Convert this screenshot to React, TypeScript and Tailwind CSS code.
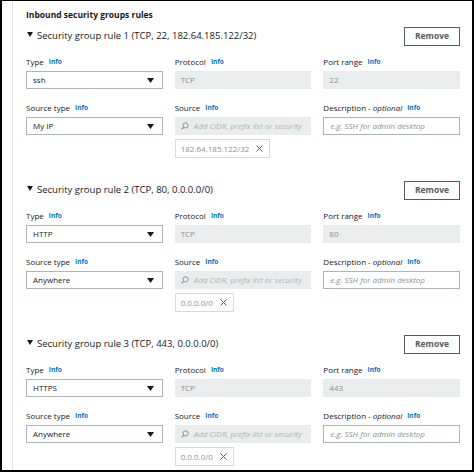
import React from "react";

const font = { fontFamily: '"Open Sans", "Noto Sans", sans-serif' };

function Caret() {
  return (
    <svg width="7" height="5" viewBox="0 0 7 5" className="shrink-0">
      <path d="M0 0 H7 L3.5 5 Z" fill="#16191f" />
    </svg>
  );
}

function Label({ children }: { children: React.ReactNode }) {
  return (
    <div className="h-[14px] flex items-center gap-[5px] text-[8px] text-[#16191f] leading-none whitespace-nowrap">
      {children}
      <span className="text-[6.5px] font-bold text-[#0073bb]">Info</span>
    </div>
  );
}

function Select({ value }: { value: string }) {
  return (
    <div className="h-[18px] border border-[#aab7b8] bg-white flex items-center justify-between pl-[6px] pr-[8px] text-[8px] text-[#16191f]">
      <span>{value}</span>
      <Caret />
    </div>
  );
}

function Disabled({ value }: { value: string }) {
  return (
    <div className="h-[18px] bg-[#eaeded] flex items-center pl-[6px] text-[8px] text-[#879596]">
      {value}
    </div>
  );
}

function Search() {
  return (
    <div className="h-[18px] bg-[#eaeded] flex items-center pl-[6px] gap-[5px] overflow-hidden whitespace-nowrap">
      <svg width="8" height="8" viewBox="0 0 8 8" className="shrink-0">
        <circle cx="4.6" cy="3.4" r="2.6" fill="none" stroke="#879596" strokeWidth="1" />
        <path d="M2.7 5.3 L0.6 7.4" stroke="#879596" strokeWidth="1.2" />
      </svg>
      <span className="text-[8px] italic text-[#aab7b8]">Add CIDR, prefix list or security</span>
    </div>
  );
}

function Chip({ value }: { value: string }) {
  return (
    <div className="h-[19px] self-start border border-[#d5dbdb] bg-white flex items-center pl-[5px] pr-[6px] gap-[7px] text-[8px] text-[#879596]">
      <span>{value}</span>
      <svg width="7" height="7" viewBox="0 0 7 7">
        <path d="M0.5 0.5 L6.5 6.5 M6.5 0.5 L0.5 6.5" stroke="#545b64" strokeWidth="1" />
      </svg>
    </div>
  );
}

function Desc() {
  return (
    <div className="h-[18px] border border-[#aab7b8] bg-white flex items-center pl-[6px] text-[8px] italic text-[#879596] whitespace-nowrap overflow-hidden">
      e.g. SSH for admin desktop
    </div>
  );
}

type Rule = { n: number; title: string; type: string; port: string; sourceType: string; cidr: string };

const rules: Rule[] = [
  { n: 1, title: "(TCP, 22, 182.64.185.122/32)", type: "ssh", port: "22", sourceType: "My IP", cidr: "182.64.185.122/32" },
  { n: 2, title: "(TCP, 80, 0.0.0.0/0)", type: "HTTP", port: "80", sourceType: "Anywhere", cidr: "0.0.0.0/0" },
  { n: 3, title: "(TCP, 443, 0.0.0.0/0)", type: "HTTPS", port: "443", sourceType: "Anywhere", cidr: "0.0.0.0/0" },
];

function RuleBlock({ r }: { r: Rule }) {
  return (
    <div className="flex flex-col">
      <div className="h-[19px] flex items-center justify-between">
        <div className="flex items-center">
          <svg width="6" height="5" viewBox="0 0 6 5" className="ml-[1px] mr-[4px] -mt-[5px]">
            <path d="M0 0 H6 L3 5 Z" fill="#16191f" />
          </svg>
          <span className="text-[9.5px] text-[#16191f] whitespace-nowrap">
            Security group rule {r.n} {r.title}
          </span>
        </div>
        <button className="w-[56px] h-[19px] border border-[#545b64] bg-white text-[8.5px] font-bold text-[#545b64] flex items-center justify-center">
          Remove
        </button>
      </div>
      <div className="grid grid-cols-3 gap-x-[12px] mt-[9px]">
        <div className="flex flex-col gap-[2px]">
          <Label>Type</Label>
          <Select value={r.type} />
        </div>
        <div className="flex flex-col gap-[2px]">
          <Label>Protocol</Label>
          <Disabled value="TCP" />
        </div>
        <div className="flex flex-col gap-[2px]">
          <Label>Port range</Label>
          <Disabled value={r.port} />
        </div>
      </div>
      <div className="grid grid-cols-3 gap-x-[12px] mt-[12px]">
        <div className="flex flex-col gap-[2px]">
          <Label>Source type</Label>
          <Select value={r.sourceType} />
        </div>
        <div className="flex flex-col gap-[2px]">
          <Label>Source</Label>
          <Search />
          <div className="mt-[2px] flex">
            <Chip value={r.cidr} />
          </div>
        </div>
        <div className="flex flex-col gap-[2px]">
          <Label>
            <span>
              Description - <span className="italic">optional</span>
            </span>
          </Label>
          <Desc />
        </div>
      </div>
    </div>
  );
}

export default function App() {
  return (
    <div style={font} className="w-[474px] h-[472px] bg-white border-black border-l-2 border-t border-r-2 border-b-2 overflow-hidden">
      <div className="ml-[10px] h-full border-l border-[#e1e4e6] pl-[13px] pr-[12px]">
        <div className="pt-[7px] h-[26px] text-[8.5px] font-bold text-[#16191f] flex items-start">
          <span className="mt-[1px]">Inbound security groups rules</span>
        </div>
        <div className="flex flex-col gap-[23px]">
          {rules.map((r) => (
            <RuleBlock key={r.n} r={r} />
          ))}
        </div>
      </div>
    </div>
  );
}
